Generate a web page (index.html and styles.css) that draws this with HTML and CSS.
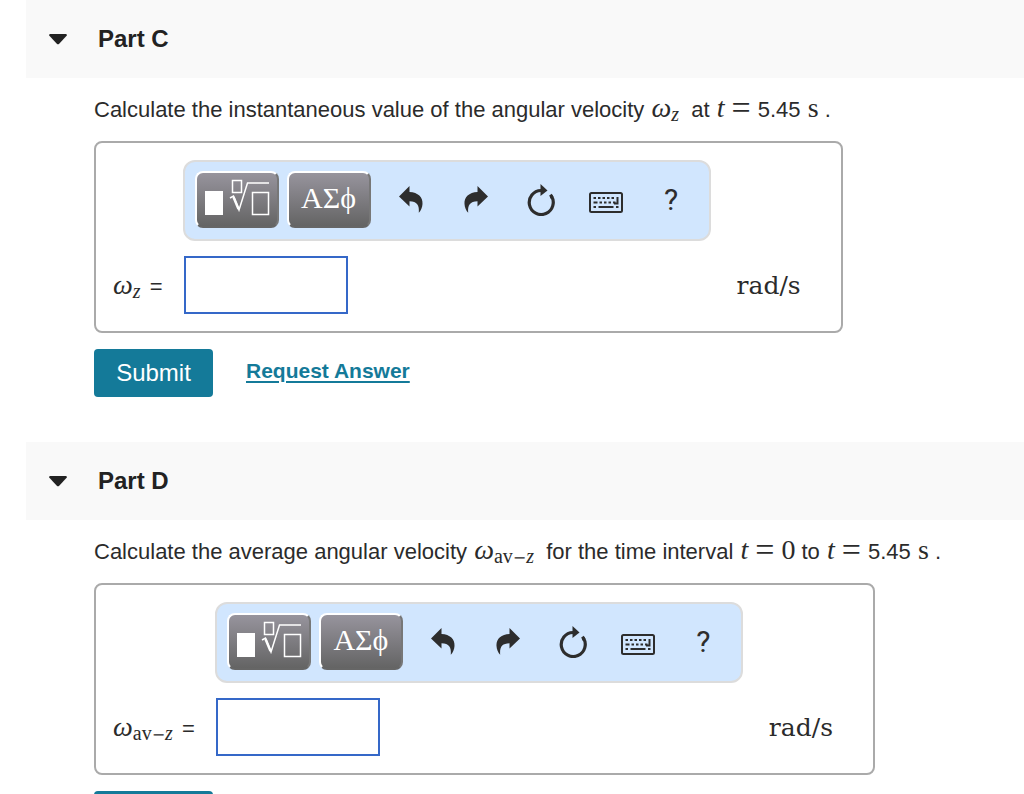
FILE: index.html
```html
<!DOCTYPE html>
<html lang="en">
<head>
    <meta charset="UTF-8">
    <meta name="viewport" content="width=device-width, initial-scale=1.0">
    <title>Angular Velocity</title>
    <link rel="stylesheet" href="styles.css">
</head>
<body>

<!-- Icons shared by both toolbars -->
<svg class="icon-defs" aria-hidden="true">
    <symbol id="icon-caret" viewBox="0 0 18 11">
        <path d="M1 0h16q1.500 .5 .6 1.800L10.200 9.700q-1.200 1-2.400 0L.4 1.800Q-.5 .5 1 0z" fill="currentColor"/>
    </symbol>
    <symbol id="icon-template" viewBox="0 0 66 38">
        <path d="M1 12h18v24H1z" fill="currentColor"/>
        <path d="M28.500 1.500h9v12h-9zM48.500 13.500h16v22h-16zM26 19l3.500-2 5.500 14 8.500-27H65" fill="none" stroke="currentColor" stroke-width="1.500"/>
        <path d="M29.500 18l5 12" stroke="currentColor" stroke-width="2.500"/>
    </symbol>
    <symbol id="icon-undo" viewBox="0 0 24 27">
        <path d="M0 10.500L10.500 0v6C19 6.500 24 11 23.500 18c-.2 3.500-1.500 6.500-3.700 8.800C20.500 19 18 15.500 10.500 15.300v5.200z" fill="currentColor"/>
    </symbol>
    <symbol id="icon-redo" viewBox="0 0 24 27">
        <path d="M24 10.500L13.500 0v6C5 6.500 0 11 .5 18c.2 3.500 1.500 6.500 3.700 8.800C3.500 19 6 15.500 13.500 15.300v5.200z" fill="currentColor"/>
    </symbol>
    <symbol id="icon-reset" viewBox="0 0 28 32">
        <path d="M14 6.500a12 12 0 1 0 10.200 5.300" fill="none" stroke="currentColor" stroke-width="3.200"/>
        <path d="M13.500 0l7 6.500-7 5.500z" fill="currentColor"/>
        <path d="M22.200 11.500l2.600-1.800 2 3.500-3 1.500z" fill="currentColor"/>
    </symbol>
    <symbol id="icon-keyboard" viewBox="0 0 34 21">
        <rect x="1" y="1" width="32" height="19" rx="1.500" fill="none" stroke="currentColor" stroke-width="2"/>
        <path d="M4.500 6h2.500m2 0h2.500m2 0h2.500m2 0h2.500m2 0h2.500M4.500 10.500h4m2 0h2.500m2 0h2.500m2 0h2.500m2 0h2.500M4.500 15h2.500m2.500 0h15m2.500 0h2.500" fill="none" stroke="currentColor" stroke-width="2"/>
        <path d="M28.500 5v6.500h-3.500" fill="none" stroke="currentColor" stroke-width="2"/>
    </symbol>
</svg>

<section class="part">
    <header class="part-header">
        <button class="toggle" type="button" aria-label="Toggle Part C"><svg><use href="#icon-caret"/></svg></button>
        <h2>Part C</h2>
    </header>
    <div class="part-body">
        <p class="question">Calculate the instantaneous value of the angular velocity <span class="math"><i>ω</i><sub><i>z</i></sub></span>&nbsp; at <span class="math"><i>t</i><span class="op">=</span></span>5.45 <span class="math">s</span> .</p>
        <div class="answer-box">
            <div class="toolbar">
                <button class="palette" type="button" aria-label="Templates"><svg><use href="#icon-template"/></svg></button>
                <button class="palette" type="button">ΑΣϕ</button>
                <div class="tools">
                    <button class="tool" type="button" aria-label="Undo"><svg class="arrow"><use href="#icon-undo"/></svg></button>
                    <button class="tool" type="button" aria-label="Redo"><svg class="arrow"><use href="#icon-redo"/></svg></button>
                    <button class="tool" type="button" aria-label="Reset"><svg class="reset"><use href="#icon-reset"/></svg></button>
                    <button class="tool" type="button" aria-label="Keyboard shortcuts"><svg class="keyboard"><use href="#icon-keyboard"/></svg></button>
                    <button class="tool" type="button">?</button>
                </div>
            </div>
            <label class="variable" for="answer-c"><span class="math"><i>ω</i><sub><i>z</i></sub></span> =</label>
            <input class="answer" id="answer-c" type="text">
            <span class="unit">rad/s</span>
        </div>
        <div class="actions">
            <button class="submit" type="button">Submit</button>
            <a class="request" href="#">Request Answer</a>
        </div>
    </div>
</section>

<section class="part">
    <header class="part-header">
        <button class="toggle" type="button" aria-label="Toggle Part D"><svg><use href="#icon-caret"/></svg></button>
        <h2>Part D</h2>
    </header>
    <div class="part-body">
        <p class="question">Calculate the average angular velocity <span class="math"><i>ω</i><sub>av<span class="minus">−</span><i>z</i></sub></span>&nbsp; for the time interval <span class="math"><i>t</i><span class="op">=</span>0</span> to <span class="math"><i>t</i><span class="op">=</span></span>5.45 <span class="math">s</span> .</p>
        <div class="answer-box">
            <div class="toolbar">
                <button class="palette" type="button" aria-label="Templates"><svg><use href="#icon-template"/></svg></button>
                <button class="palette" type="button">ΑΣϕ</button>
                <div class="tools">
                    <button class="tool" type="button" aria-label="Undo"><svg class="arrow"><use href="#icon-undo"/></svg></button>
                    <button class="tool" type="button" aria-label="Redo"><svg class="arrow"><use href="#icon-redo"/></svg></button>
                    <button class="tool" type="button" aria-label="Reset"><svg class="reset"><use href="#icon-reset"/></svg></button>
                    <button class="tool" type="button" aria-label="Keyboard shortcuts"><svg class="keyboard"><use href="#icon-keyboard"/></svg></button>
                    <button class="tool" type="button">?</button>
                </div>
            </div>
            <label class="variable" for="answer-d"><span class="math"><i>ω</i><sub>av<span class="minus">−</span><i>z</i></sub></span> =</label>
            <input class="answer" id="answer-d" type="text">
            <span class="unit">rad/s</span>
        </div>
        <div class="actions">
            <button class="submit" type="button">Submit</button>
            <a class="request" href="#">Request Answer</a>
        </div>
    </div>
</section>

</body>
</html>
```
FILE: styles.css
```css
* {
    box-sizing: border-box;
}

body {
    margin: 0;
    background-color: #fff;
    color: #2b2b2b;
    font-family: "Liberation Sans", Arial, sans-serif;
    font-size: 22px;
}

button {
    padding: 0;
    border: none;
    background: none;
    color: inherit;
    font-family: inherit;
    cursor: pointer;
}

svg {
    display: block;
}

.icon-defs {
    display: none;
}

.part {
    margin-left: 26px;
}

.part-header {
    display: flex;
    align-items: center;
    gap: 31px;
    height: 78px;
    padding-left: 23px;
    background-color: #f9f9f9;
}

.part-header h2 {
    margin: 0;
    font-size: 24px;
    color: #222;
}

.toggle svg {
    width: 18px;
    height: 11px;
    color: #222;
}

.part-body {
    padding: 12px 0 45px 68px;
}

.question {
    margin: 0 0 11px;
    line-height: 40px;
    white-space: nowrap;
}

.math {
    margin-left: 1px;
    font-family: "Liberation Serif", "Times New Roman", serif;
    font-size: 28px;
    line-height: 1;
}

.math sub {
    font-size: 20px;
    line-height: 0;
    vertical-align: -4px;
}

.math .op {
    margin: 0 7px;
    font-size: 34px;
    line-height: 0;
    vertical-align: -2px;
}

.math .minus {
    font-family: "DejaVu Serif", serif;
    font-size: 16px;
}

.answer-box {
    display: grid;
    grid-template-columns: auto auto auto;
    column-gap: 20px;
    row-gap: 15px;
    align-items: center;
    width: fit-content;
    padding: 17px 40px 17px 17px;
    border: 2px solid #aaa;
    border-radius: 8px;
}

.toolbar {
    grid-column: 2;
    display: flex;
    align-items: center;
    gap: 8px;
    height: 81px;
    padding: 0 5px 2px 10px;
    border: 2px solid #dcdcdc;
    border-radius: 12px;
    background-color: #d1e6fe;
}

.palette {
    display: flex;
    align-items: center;
    justify-content: center;
    width: 84px;
    height: 57px;
    padding-bottom: 3px;
    border: 2px solid #fff;
    border-right-color: #777;
    border-bottom-color: #666;
    border-radius: 8px;
    background: linear-gradient(#97949d, #646464);
    color: #fff;
    font-family: "Liberation Serif", serif;
    font-size: 30px;
}

.palette svg {
    width: 66px;
    height: 38px;
}

.tools {
    display: flex;
}

.tool {
    display: flex;
    align-items: center;
    justify-content: center;
    width: 65px;
    height: 57px;
    color: #2d2d2d;
    font-family: Roboto, sans-serif;
    font-size: 30px;
}

.arrow {
    width: 24px;
    height: 27px;
}

.reset {
    width: 28px;
    height: 32px;
}

.keyboard {
    width: 34px;
    height: 21px;
    margin-top: 6px;
}

.variable {
    grid-column: 1;
    white-space: nowrap;
}

.variable .math {
    margin: 0 3px 0 0;
}

.answer {
    width: 164px;
    height: 58px;
    margin-left: 1px;
    padding: 0 10px;
    border: 2px solid #3568c8;
    background-color: #fff;
    font-family: inherit;
    font-size: 22px;
}

.unit {
    margin-left: 6px;
    font-family: "DejaVu Serif", serif;
    font-size: 25px;
}

.actions {
    display: flex;
    align-items: center;
    gap: 33px;
    margin-top: 16px;
}

.submit {
    width: 119px;
    height: 48px;
    border-radius: 4px;
    background-color: #147a99;
    color: #fff;
    font-size: 24px;
}

.request {
    padding-bottom: 4px;
    color: #147a99;
    font-size: 21px;
    font-weight: bold;
    text-underline-offset: 3px;
}
```
